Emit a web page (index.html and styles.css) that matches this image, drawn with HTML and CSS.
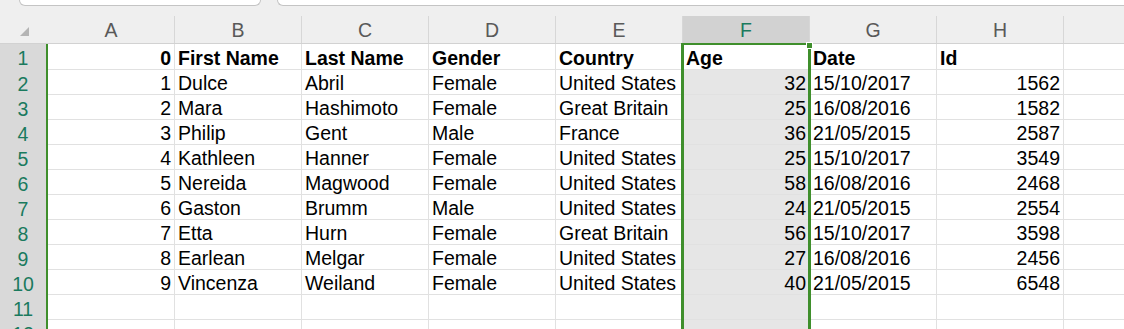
FILE: index.html
```html
<!DOCTYPE html>
<html>
<head>
<meta charset="utf-8">
<link rel="stylesheet" href="styles.css">
</head>
<body>
<div class="sheet">
  <div class="top">
    <div class="box box1"></div>
    <div class="box box2"></div>
  </div>
  <div class="colheads">
    <div class="corner"><svg class="tri" width="9" height="9" viewBox="0 0 9 9"><polygon points="0,9 9,9 9,0" fill="#b4b4b4"/></svg></div>
    <div class="ch">A</div><div class="ch">B</div><div class="ch">C</div><div class="ch">D</div><div class="ch">E</div><div class="ch chsel">F</div><div class="ch">G</div><div class="ch">H</div><div class="ch last"></div>
  </div>
  <div class="row first"><div class="rh">1</div><div class="c n b">0</div><div class="c b">First Name</div><div class="c b">Last Name</div><div class="c b">Gender</div><div class="c b">Country</div><div class="c b">Age</div><div class="c b">Date</div><div class="c b">Id</div><div class="c last"></div></div>
  <div class="row"><div class="rh">2</div><div class="c n">1</div><div class="c">Dulce</div><div class="c">Abril</div><div class="c">Female</div><div class="c">United States</div><div class="c n sel">32</div><div class="c">15/10/2017</div><div class="c n">1562</div><div class="c last"></div></div>
  <div class="row"><div class="rh">3</div><div class="c n">2</div><div class="c">Mara</div><div class="c">Hashimoto</div><div class="c">Female</div><div class="c">Great Britain</div><div class="c n sel">25</div><div class="c">16/08/2016</div><div class="c n">1582</div><div class="c last"></div></div>
  <div class="row"><div class="rh">4</div><div class="c n">3</div><div class="c">Philip</div><div class="c">Gent</div><div class="c">Male</div><div class="c">France</div><div class="c n sel">36</div><div class="c">21/05/2015</div><div class="c n">2587</div><div class="c last"></div></div>
  <div class="row"><div class="rh">5</div><div class="c n">4</div><div class="c">Kathleen</div><div class="c">Hanner</div><div class="c">Female</div><div class="c">United States</div><div class="c n sel">25</div><div class="c">15/10/2017</div><div class="c n">3549</div><div class="c last"></div></div>
  <div class="row"><div class="rh">6</div><div class="c n">5</div><div class="c">Nereida</div><div class="c">Magwood</div><div class="c">Female</div><div class="c">United States</div><div class="c n sel">58</div><div class="c">16/08/2016</div><div class="c n">2468</div><div class="c last"></div></div>
  <div class="row"><div class="rh">7</div><div class="c n">6</div><div class="c">Gaston</div><div class="c">Brumm</div><div class="c">Male</div><div class="c">United States</div><div class="c n sel">24</div><div class="c">21/05/2015</div><div class="c n">2554</div><div class="c last"></div></div>
  <div class="row"><div class="rh">8</div><div class="c n">7</div><div class="c">Etta</div><div class="c">Hurn</div><div class="c">Female</div><div class="c">Great Britain</div><div class="c n sel">56</div><div class="c">15/10/2017</div><div class="c n">3598</div><div class="c last"></div></div>
  <div class="row"><div class="rh">9</div><div class="c n">8</div><div class="c">Earlean</div><div class="c">Melgar</div><div class="c">Female</div><div class="c">United States</div><div class="c n sel">27</div><div class="c">16/08/2016</div><div class="c n">2456</div><div class="c last"></div></div>
  <div class="row"><div class="rh">10</div><div class="c n">9</div><div class="c">Vincenza</div><div class="c">Weiland</div><div class="c">Female</div><div class="c">United States</div><div class="c n sel">40</div><div class="c">21/05/2015</div><div class="c n">6548</div><div class="c last"></div></div>
  <div class="row"><div class="rh">11</div><div class="c"></div><div class="c"></div><div class="c"></div><div class="c"></div><div class="c"></div><div class="c sel"></div><div class="c"></div><div class="c"></div><div class="c last"></div></div>
  <div class="row"><div class="rh">12</div><div class="c"></div><div class="c"></div><div class="c"></div><div class="c"></div><div class="c"></div><div class="c sel"></div><div class="c"></div><div class="c"></div><div class="c last"></div></div>
  <div class="selection"><span class="handle"></span></div>
</div>
</body>
</html>
```

FILE: styles.css
```css
html, body {
  margin: 0;
  padding: 0;
  background: #ffffff;
}
body {
  width: 1124px;
  height: 329px;
  overflow: hidden;
  font-family: "Liberation Sans", Arial, sans-serif;
}
.sheet {
  position: relative;
  width: 1124px;
  height: 329px;
  overflow: hidden;
}
.top {
  display: flex;
  height: 6px;
  background: #efefef;
}
.box {
  box-sizing: border-box;
  height: 6px;
  background: #ffffff;
  border: 1px solid #c4c4c4;
  border-top: none;
}
.box1 {
  margin-left: 19px;
  width: 242px;
  border-radius: 0 0 6px 6px;
}
.box2 {
  margin-left: 16px;
  flex: 1;
  border-right: none;
  border-radius: 0 0 0 6px;
}
.colheads {
  display: flex;
  box-sizing: border-box;
  height: 38px;
  background: #efefef;
  border-bottom: 1px solid #d2d2d2;
}
.corner {
  width: 48px;
  flex: none;
}
.tri {
  display: block;
  margin: 21px 0 0 20px;
}
.ch {
  box-sizing: border-box;
  width: 127px;
  flex: none;
  margin-top: 10px;
  height: 27px;
  padding-top: 2px;
  border-right: 1px solid #d7d7d7;
  display: flex;
  align-items: center;
  justify-content: center;
  font-size: 19.5px;
  color: #595959;
}
.chsel {
  background: #d2d2d2;
  color: #1a7a5e;
}
.ch.last {
  flex: 1;
  border-right: none;
}
.row {
  display: flex;
  height: 25px;
}
.row.first {
  height: 26px;
}
.rh {
  box-sizing: border-box;
  width: 48px;
  flex: none;
  padding-top: 3px;
  background: #d9d9d9;
  border-right: 2px solid #3f8f2c;
  display: flex;
  align-items: center;
  justify-content: center;
  font-size: 19.5px;
  color: #1a7a5e;
}
.c {
  box-sizing: border-box;
  width: 127px;
  flex: none;
  padding: 3px 3px 0 3px;
  border-right: 1px solid #e1e1e1;
  border-bottom: 1px solid #e1e1e1;
  display: flex;
  align-items: center;
  white-space: nowrap;
  overflow: hidden;
  font-size: 19.5px;
  color: #000000;
}
.c.n {
  justify-content: flex-end;
}
.c.b {
  font-weight: bold;
}
.c.sel {
  background: #e6e6e6;
}
.c.last {
  flex: 1;
  border-right: none;
}
.selection {
  position: absolute;
  left: 681px;
  top: 43px;
  width: 130px;
  height: 300px;
  box-sizing: border-box;
  border: 3px solid #3f8f2c;
  border-top-width: 2px;
  pointer-events: none;
}
.handle {
  position: absolute;
  right: -5px;
  top: -3px;
  width: 5px;
  height: 5px;
  background: #3f8f2c;
  border: 1px solid #ffffff;
}
```
